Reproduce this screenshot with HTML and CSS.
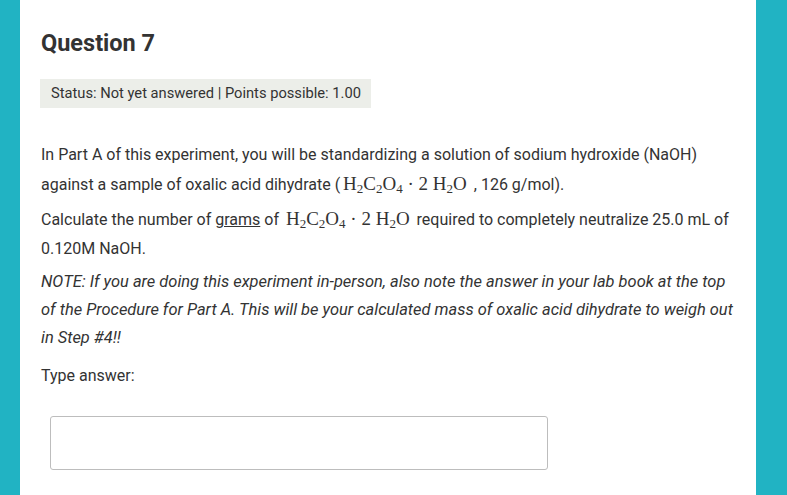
FILE: index.html
```html
<!DOCTYPE html>
<html>
<head>
<meta charset="utf-8">
<link rel="stylesheet" href="styles.css">
</head>
<body>
<div class="edge-left"></div>
<main class="card">
  <h1 class="title">Question 7</h1>
  <div class="status">Status: Not yet answered | Points possible: 1.00</div>
  <div class="content">
    <p class="p1">In Part A of this experiment, you will be standardizing a solution of sodium hydroxide (NaOH) against a sample of oxalic acid dihydrate (<span class="math">H<sub>2</sub>C<sub>2</sub>O<sub>4</sub> · 2 H<sub>2</sub>O</span> , 126 g/mol).</p>
    <p class="p2">Calculate the number of <u>grams</u> of <span class="math">H<sub>2</sub>C<sub>2</sub>O<sub>4</sub> · 2 H<sub>2</sub>O</span> required to completely neutralize 25.0 mL of 0.120M NaOH.</p>
    <p class="note">NOTE: If you are doing this experiment in-person, also note the answer in your lab book at the top of the Procedure for Part A. This will be your calculated mass of oxalic acid dihydrate to weigh out in Step #4!!</p>
    <p class="label">Type answer:</p>
    <div class="answer"></div>
  </div>
</main>
<div class="edge-right"></div>
</body>
</html>
```
FILE: styles.css
```css
html, body {
  margin: 0;
  padding: 0;
  height: 100%;
}
body {
  display: flex;
  background: #21b3c3;
  font-family: Roboto, "Liberation Sans", sans-serif;
  color: #333;
  overflow: hidden;
}
.edge-left { width: 20px; flex: none; }
.edge-right { width: 31px; flex: none; }
.card {
  flex: 1;
  background: #fff;
  padding: 29px 20px 0 21px;
}
.title {
  margin: 0;
  font-size: 23.5px;
  font-weight: 700;
  line-height: 28px;
  color: #333;
}
.status {
  display: inline-block;
  margin-top: 22px;
  margin-left: -1px;
  background: #eceee9;
  padding: 0 10px 0 11px;
  height: 29px;
  line-height: 29px;
  font-size: 14.7px;
  color: #333;
}
.content {
  margin-top: 32px;
  font-size: 16px;
  line-height: 29px;
}
.content p { margin: 0; }
.p2 { margin-top: 5px !important; }
.note {
  font-style: italic;
  font-size: 16.45px;
  margin-top: 5px !important;
  line-height: 28px;
}
.label { margin-top: 9px !important; }
.math {
  font-family: "Liberation Serif", "DejaVu Serif", serif;
  font-size: 19px;
  margin: 0 3px;
}
.math sub {
  font-size: 13px;
  line-height: 0;
  vertical-align: -3px;
}
.answer {
  margin: 26px 0 0 9px;
  width: 496px;
  height: 52px;
  border: 1px solid #bdbdbd;
  border-radius: 3px;
}
```
